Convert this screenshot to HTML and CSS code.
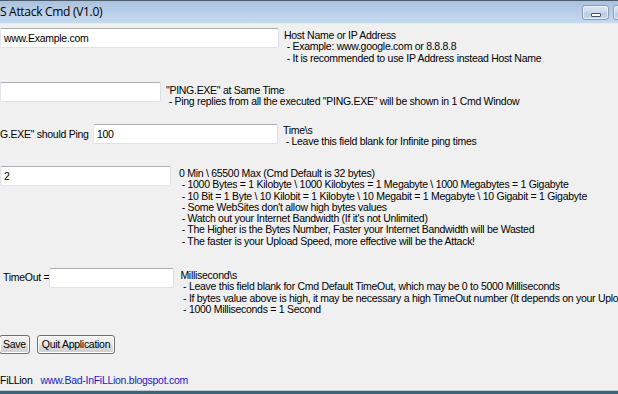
FILE: index.html
```html
<!DOCTYPE html>
<html>
<head>
<meta charset="utf-8">
<link rel="stylesheet" href="styles.css">
</head>
<body>
<div class="window">
  <div class="titlebar">
    <div class="title">S Attack Cmd (V1.0)</div>
    <div class="caption-buttons">
      <div class="cap-btn min"><span class="min-glyph"></span></div>
      <div class="cap-btn max"></div>
    </div>
  </div>
  <div class="client">
    <div class="row r1">
      <div class="input w1">www.Example.com</div>
      <div class="label l1">
        <div>Host Name or IP Address</div>
        <div>&nbsp;- Example: www.google.com or 8.8.8.8</div>
        <div>&nbsp;- It is recommended to use IP Address instead Host Name</div>
      </div>
    </div>
    <div class="row r2">
      <div class="input w2"></div>
      <div class="label l2">
        <div>"PING.EXE" at Same Time</div>
        <div>&nbsp;- Ping replies from all the executed "PING.EXE" will be shown in 1 Cmd Window</div>
      </div>
    </div>
    <div class="row r3">
      <div class="prefix p3">G.EXE" should Ping</div>
      <div class="input w3">100</div>
      <div class="label l3">
        <div>Time\s</div>
        <div>&nbsp;- Leave this field blank for Infinite ping times</div>
      </div>
    </div>
    <div class="row r4">
      <div class="input w4">2</div>
      <div class="label l4">
        <div>0 Min \ 65500 Max (Cmd Default is 32 bytes)</div>
        <div>&nbsp;- 1000 Bytes = 1 Kilobyte \ 1000 Kilobytes = 1 Megabyte \ 1000 Megabytes = 1 Gigabyte</div>
        <div>&nbsp;- 10 Bit = 1 Byte \ 10 Kilobit = 1 Kilobyte \ 10 Megabit = 1 Megabyte \ 10 Gigabit = 1 Gigabyte</div>
        <div>&nbsp;- Some WebSites don't allow high bytes values</div>
        <div>&nbsp;- Watch out your Internet Bandwidth (If it's not Unlimited)</div>
        <div>&nbsp;- The Higher is the Bytes Number, Faster your Internet Bandwidth will be Wasted</div>
        <div>&nbsp;- The faster is your Upload Speed, more effective will be the Attack!</div>
      </div>
    </div>
    <div class="row r5">
      <div class="prefix p5">TimeOut =</div>
      <div class="input w5"></div>
      <div class="label l5">
        <div>Millisecond\s</div>
        <div>&nbsp;- Leave this field blank for Cmd Default TimeOut, which may be 0 to 5000 Milliseconds</div>
        <div>&nbsp;- If bytes value above is high, it may be necessary a high TimeOut number (It depends on your Upload</div>
        <div>&nbsp;- 1000 Milliseconds = 1 Second</div>
      </div>
    </div>
    <div class="row buttons">
      <div class="btn save">Save</div>
      <div class="btn quit">Quit Application</div>
    </div>
    <div class="row footer">
      <span class="author">FiLLion</span>
      <span class="link">www.Bad-InFiLLion.blogspot.com</span>
    </div>
  </div>
  <div class="bottom-frame"></div>
</div>
</body>
</html>
```

FILE: styles.css
```css
html, body {
  margin: 0;
  padding: 0;
}
body {
  width: 618px;
  height: 394px;
  overflow: hidden;
  background: #f0f0f0;
  font-family: "Liberation Sans", Arial, sans-serif;
  font-size: 10.5px;
  letter-spacing: -0.28px;
  color: #000;
}
.window {
  display: flex;
  flex-direction: column;
  height: 394px;
}
.titlebar {
  height: 22px;
  border-top: 1px solid #4e5a68;
  background: linear-gradient(#aac2de, #bcd1ea 60%, #c6d8ed);
  display: flex;
  justify-content: space-between;
  align-items: flex-start;
  flex-shrink: 0;
}
.title {
  font-family: "Open Sans", "Noto Sans", sans-serif;
  font-size: 12px;
  letter-spacing: -0.3px;
  line-height: 20px;
  padding-top: 1px;
  color: #000;
  white-space: nowrap;
}
.caption-buttons {
  display: flex;
  gap: 4px;
  margin-top: 4px;
  margin-right: -22px;
}
.cap-btn {
  width: 25px;
  height: 13px;
  border: 1px solid #8a9db5;
  border-radius: 3px;
  background: linear-gradient(#dfe8f3, #c9d8ea 50%, #b8cbe2 51%, #c8d8ec);
  box-shadow: inset 0 0 0 1px rgba(255,255,255,0.55);
  display: flex;
  align-items: center;
  justify-content: center;
}
.min-glyph {
  width: 8px;
  height: 2px;
  margin-top: 4px;
  background: #fff;
  border: 1px solid #4a5563;
  border-radius: 1px;
}
.client {
  flex: 1;
  background: #f0f0f0;
  border-top: 1px solid #e4ecf5;
  display: flex;
  flex-direction: column;
  white-space: nowrap;
}
.row {
  display: flex;
  align-items: flex-start;
  flex-shrink: 0;
}
.input {
  height: 18px;
  background: #fff;
  border: 1px solid #dfe3e9;
  border-top-color: #abadb3;
  border-left-color: #e2e3ea;
  border-right-color: #dbdfe6;
  border-radius: 2px;
  line-height: 18px;
  padding-left: 3px;
  box-sizing: content-box;
  flex-shrink: 0;
}
.label {
  line-height: 11.3px;
}
.r1 { margin-top: 4px; height: 54px; }
.w1 { width: 274px; }
.l1 { margin-left: 5px; padding-top: 2px; }
.r2 { height: 42px; }
.w2 { width: 156px; }
.l2 { margin-left: 5px; padding-top: 3px; }
.r3 { height: 42px; }
.p3 { line-height: 20px; width: 93px; }
.w3 { width: 180px; padding-left: 3px; }
.l3 { margin-left: 5px; padding-top: 1px; }
.r4 { height: 102px; }
.w4 { width: 166px; }
.l4 { margin-left: 8px; padding-top: 2px; }
.r5 { height: 67px; }
.p5 { width: 49px; padding-left: 3px; line-height: 18px; }
.w5 { width: 120px; }
.l5 { margin-left: 6px; padding-top: 2px; }
.buttons { gap: 7px; height: 38px; }
.btn {
  height: 17px;
  line-height: 17px;
  border: 1px solid #707070;
  border-radius: 3px;
  background: linear-gradient(#f2f2f2, #ebebeb 50%, #dddddd 51%, #cfcfcf);
  box-shadow: inset 0 0 0 1px #fcfcfc;
  text-align: center;
}
.save { width: 29px; margin-left: -1px; }
.quit { width: 76px; }
.footer { gap: 8px; line-height: 14px; }
.link { color: #1a1acc; }
.bottom-frame {
  height: 3px;
  background: #3a6577;
  border-top: 1px solid #c4ccd2;
  flex-shrink: 0;
}
```
